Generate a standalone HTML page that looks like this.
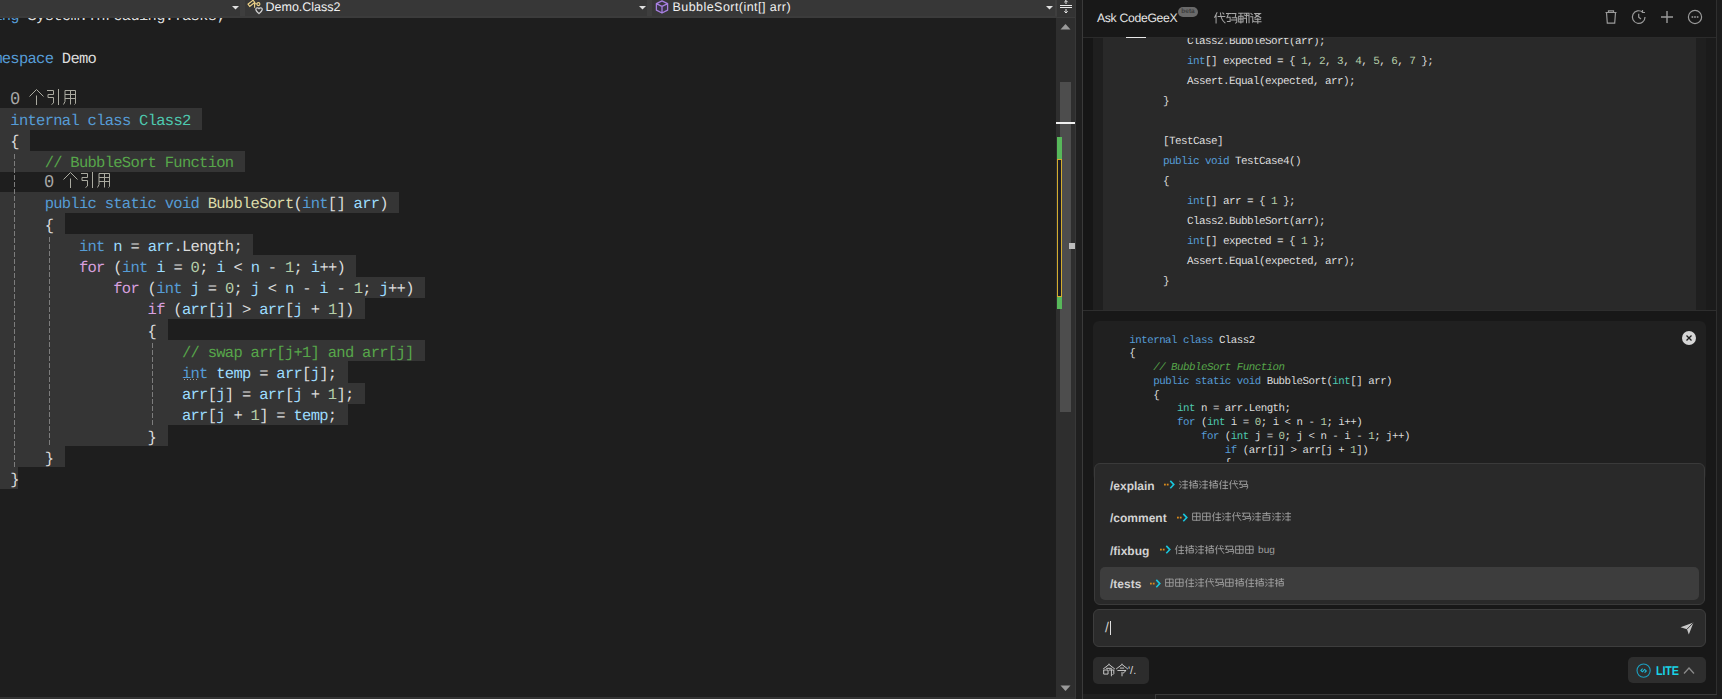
<!DOCTYPE html><html><head><meta charset="utf-8"><style>
*{margin:0;padding:0;box-sizing:border-box}
html,body{width:1722px;height:699px;overflow:hidden;background:#1e1e1e;font-family:"Liberation Sans",sans-serif;text-rendering:geometricPrecision}
.abs{position:absolute}
#ed{position:absolute;left:0;top:18px;width:1056px;height:679px;overflow:hidden;background:#1e1e1e}
#edin{position:absolute;left:0;top:-18px;width:1056px;height:699px}
.sel{position:absolute;left:0;background:#353535}
.guide{position:absolute;width:1px;background:repeating-linear-gradient(to bottom,#7c7c7c 0 5px,transparent 5px 7px)}
.ln{position:absolute;height:21.2px;line-height:21.2px;white-space:pre;font-family:"Liberation Mono",monospace;font-size:15.500px;letter-spacing:-0.721px;padding-top:2.5px}
.lens{position:absolute;font-family:"Liberation Mono",monospace;font-size:18px;line-height:18px;color:#a8a8a8;transform:scaleX(0.95);transform-origin:0 0}
.nvt{top:0px;font-size:12.5px;line-height:15px;color:#f0f0f0;white-space:nowrap}
.ml{position:absolute;white-space:pre;font-family:"Liberation Mono",monospace}
.cmd{font-size:12px;font-weight:bold;color:#d2d2d2;line-height:14px;white-space:nowrap}
.desc{font-size:10px;color:#a0a0a0;line-height:12px;white-space:nowrap}
</style></head><body>
<div id="ed"><div id="edin">
<div class="sel" style="top:108.4px;height:21.2px;width:201.9px"></div>
<div class="sel" style="top:129.6px;height:21.2px;width:30.3px"></div>
<div class="sel" style="top:150.8px;height:21.2px;width:244.8px"></div>
<div class="sel" style="top:191.8px;height:21.2px;width:399.2px"></div>
<div class="sel" style="top:213.0px;height:21.2px;width:64.6px"></div>
<div class="sel" style="top:234.2px;height:21.2px;width:253.4px"></div>
<div class="sel" style="top:255.4px;height:21.2px;width:356.3px"></div>
<div class="sel" style="top:276.6px;height:21.2px;width:425.0px"></div>
<div class="sel" style="top:297.8px;height:21.2px;width:364.9px"></div>
<div class="sel" style="top:319.0px;height:21.2px;width:167.6px"></div>
<div class="sel" style="top:340.2px;height:21.2px;width:425.0px"></div>
<div class="sel" style="top:361.4px;height:21.2px;width:347.8px"></div>
<div class="sel" style="top:382.6px;height:21.2px;width:364.9px"></div>
<div class="sel" style="top:403.8px;height:21.2px;width:347.8px"></div>
<div class="sel" style="top:425.0px;height:21.2px;width:167.6px"></div>
<div class="sel" style="top:446.2px;height:21.2px;width:64.6px"></div>
<div class="sel" style="top:467.4px;height:21.2px;width:18.3px"></div>
<div class="guide" style="left:14px;top:153.5px;height:313.5px"></div>
<div class="guide" style="left:49px;top:236.5px;height:209.5px"></div>
<div class="guide" style="left:152px;top:342.5px;height:82.5px"></div>
<div class="ln" style="top:3.8px;left:-24.00px"><span style="color:#569cd6">using</span><span style="color:#dcdcdc"> System.Threading.Tasks;</span></div>
<div class="ln" style="top:46.2px;left:-24.00px"><span style="color:#569cd6">namespace</span><span style="color:#dcdcdc"> Demo</span></div>
<div class="ln" style="top:67.4px;left:-24.00px"><span style="color:#dcdcdc">{</span></div>
<div class="ln" style="top:108.4px;left:10.32px"><span style="color:#569cd6">internal</span><span style="color:#dcdcdc"> </span><span style="color:#569cd6">class</span><span style="color:#dcdcdc"> </span><span style="color:#4ec9b0">Class2</span></div>
<div class="ln" style="top:129.6px;left:10.32px"><span style="color:#dcdcdc">{</span></div>
<div class="ln" style="top:150.8px;left:44.64px"><span style="color:#57a64a">// BubbleSort Function</span></div>
<div class="ln" style="top:191.8px;left:44.64px"><span style="color:#569cd6">public</span><span style="color:#dcdcdc"> </span><span style="color:#569cd6">static</span><span style="color:#dcdcdc"> </span><span style="color:#569cd6">void</span><span style="color:#dcdcdc"> </span><span style="color:#dcdcaa">BubbleSort</span><span style="color:#dcdcdc">(</span><span style="color:#569cd6">int</span><span style="color:#dcdcdc">[] </span><span style="color:#9cdcfe">arr</span><span style="color:#dcdcdc">)</span></div>
<div class="ln" style="top:213.0px;left:44.64px"><span style="color:#dcdcdc">{</span></div>
<div class="ln" style="top:234.2px;left:78.96px"><span style="color:#569cd6">int</span><span style="color:#dcdcdc"> </span><span style="color:#9cdcfe">n</span><span style="color:#dcdcdc"> = </span><span style="color:#9cdcfe">arr</span><span style="color:#dcdcdc">.Length;</span></div>
<div class="ln" style="top:255.4px;left:78.96px"><span style="color:#d8a0df">for</span><span style="color:#dcdcdc"> (</span><span style="color:#569cd6">int</span><span style="color:#dcdcdc"> </span><span style="color:#9cdcfe">i</span><span style="color:#dcdcdc"> = </span><span style="color:#b5cea8">0</span><span style="color:#dcdcdc">; </span><span style="color:#9cdcfe">i</span><span style="color:#dcdcdc"> &lt; </span><span style="color:#9cdcfe">n</span><span style="color:#dcdcdc"> - </span><span style="color:#b5cea8">1</span><span style="color:#dcdcdc">; </span><span style="color:#9cdcfe">i</span><span style="color:#dcdcdc">++)</span></div>
<div class="ln" style="top:276.6px;left:113.28px"><span style="color:#d8a0df">for</span><span style="color:#dcdcdc"> (</span><span style="color:#569cd6">int</span><span style="color:#dcdcdc"> </span><span style="color:#9cdcfe">j</span><span style="color:#dcdcdc"> = </span><span style="color:#b5cea8">0</span><span style="color:#dcdcdc">; </span><span style="color:#9cdcfe">j</span><span style="color:#dcdcdc"> &lt; </span><span style="color:#9cdcfe">n</span><span style="color:#dcdcdc"> - </span><span style="color:#9cdcfe">i</span><span style="color:#dcdcdc"> - </span><span style="color:#b5cea8">1</span><span style="color:#dcdcdc">; </span><span style="color:#9cdcfe">j</span><span style="color:#dcdcdc">++)</span></div>
<div class="ln" style="top:297.8px;left:147.60px"><span style="color:#d8a0df">if</span><span style="color:#dcdcdc"> (</span><span style="color:#9cdcfe">arr</span><span style="color:#dcdcdc">[</span><span style="color:#9cdcfe">j</span><span style="color:#dcdcdc">] &gt; </span><span style="color:#9cdcfe">arr</span><span style="color:#dcdcdc">[</span><span style="color:#9cdcfe">j</span><span style="color:#dcdcdc"> + </span><span style="color:#b5cea8">1</span><span style="color:#dcdcdc">])</span></div>
<div class="ln" style="top:319.0px;left:147.60px"><span style="color:#dcdcdc">{</span></div>
<div class="ln" style="top:340.2px;left:181.92px"><span style="color:#57a64a">// swap arr[j+1] and arr[j]</span></div>
<div class="ln" style="top:361.4px;left:181.92px"><span style="color:#569cd6">int</span><span style="color:#dcdcdc"> </span><span style="color:#9cdcfe">temp</span><span style="color:#dcdcdc"> = </span><span style="color:#9cdcfe">arr</span><span style="color:#dcdcdc">[</span><span style="color:#9cdcfe">j</span><span style="color:#dcdcdc">];</span></div>
<div class="ln" style="top:382.6px;left:181.92px"><span style="color:#9cdcfe">arr</span><span style="color:#dcdcdc">[</span><span style="color:#9cdcfe">j</span><span style="color:#dcdcdc">] = </span><span style="color:#9cdcfe">arr</span><span style="color:#dcdcdc">[</span><span style="color:#9cdcfe">j</span><span style="color:#dcdcdc"> + </span><span style="color:#b5cea8">1</span><span style="color:#dcdcdc">];</span></div>
<div class="ln" style="top:403.8px;left:181.92px"><span style="color:#9cdcfe">arr</span><span style="color:#dcdcdc">[</span><span style="color:#9cdcfe">j</span><span style="color:#dcdcdc"> + </span><span style="color:#b5cea8">1</span><span style="color:#dcdcdc">] = </span><span style="color:#9cdcfe">temp</span><span style="color:#dcdcdc">;</span></div>
<div class="ln" style="top:425.0px;left:147.60px"><span style="color:#dcdcdc">}</span></div>
<div class="ln" style="top:446.2px;left:44.64px"><span style="color:#dcdcdc">}</span></div>
<div class="ln" style="top:467.4px;left:10.32px"><span style="color:#dcdcdc">}</span></div>
<div class="abs" style="left:184px;top:379px;width:13px;height:1px;background:repeating-linear-gradient(to right,#a0a0a0 0 1px,transparent 1px 3px)"></div>
<div class="lens" style="left:10.4px;top:91px">0</div>
<svg class="abs" style="left:0px;top:0px" width="90" height="110"><path d="M36.5 89.5L29.5 96.5 M36.5 89.5L43.5 96.5 M36.5 95.5V105 M47 90.5H53.5V94.5H48V97.5H53.5V103L51.5 104.5 M58.5 89V105 M65 90.5V101.5L63.5 104.5 M65 90.5H75.5V103.5L74.5 104.5 M70.5 90.5V104.5 M65 94.5H75.5 M65 98.5H75.5" stroke="#aaaaa0" stroke-width="1" fill="none"/></svg>
<div class="lens" style="left:44.4px;top:174px">0</div>
<svg class="abs" style="left:34px;top:83px" width="90" height="110"><path d="M36.5 89.5L29.5 96.5 M36.5 89.5L43.5 96.5 M36.5 95.5V105 M47 90.5H53.5V94.5H48V97.5H53.5V103L51.5 104.5 M58.5 89V105 M65 90.5V101.5L63.5 104.5 M65 90.5H75.5V103.5L74.5 104.5 M70.5 90.5V104.5 M65 94.5H75.5 M65 98.5H75.5" stroke="#aaaaa0" stroke-width="1" fill="none"/></svg>
</div></div>

<div class="abs" style="left:0;top:0;width:1057px;height:16px;background:#3e3e3e"></div>
<div class="abs" style="left:0;top:16px;width:1075px;height:2px;background:#3b3b3b"></div>
<div class="abs" style="left:0;top:0;width:240px;height:16px;background:#373737"></div>
<div class="abs" style="left:245px;top:0;width:402px;height:16px;background:#373737"></div>
<div class="abs" style="left:652px;top:0;width:403px;height:16px;background:#373737"></div>
<div class="abs" style="left:1057px;top:0;width:18px;height:17px;background:#333333"></div>
<svg class="abs" style="left:232px;top:5px" width="7" height="5"><path d="M0 1H7L3.5 4.5Z" fill="#e0e0e0"/></svg><svg class="abs" style="left:638.5px;top:5px" width="7" height="5"><path d="M0 1H7L3.5 4.5Z" fill="#e0e0e0"/></svg><svg class="abs" style="left:1045.5px;top:5px" width="7" height="5"><path d="M0 1H7L3.5 4.5Z" fill="#e0e0e0"/></svg>
<svg class="abs" style="left:244px;top:0" width="22" height="16" viewBox="0 0 22 16">
 <rect x="4.2" y="1.9" width="6.4" height="2.8" transform="rotate(-38 7.4 3.3)" stroke="#f0d58a" stroke-width="1.1" fill="none"/>
 <path d="M10.6 2.6V7.8 M10.2 3.8H12.8" stroke="#f0d58a" stroke-width="1.1" fill="none"/>
 <circle cx="14.4" cy="4.1" r="1.5" stroke="#f0d58a" stroke-width="1.1" fill="none"/>
 <path d="M11.8 9.3C11.8 7.6 14 7.4 15 8.7C16 7.4 18.3 7.6 18.3 9.3C18.3 10.9 15 13.6 15 13.6C15 13.6 11.8 10.9 11.8 9.3Z" stroke="#d0d0d0" stroke-width="1.2" fill="none"/>
</svg>
<div class="abs nvt" style="left:265.5px">Demo.Class2</div>
<svg class="abs" style="left:655px;top:0" width="14" height="14" viewBox="0 0 14 14">
 <path d="M7 0.8L12.6 3.6V10.2L7 13L1.4 10.2V3.6Z M1.4 3.6L7 6.4L12.6 3.6 M7 6.4V13" stroke="#a77fe0" stroke-width="1.3" fill="#3a3548" stroke-linejoin="round"/>
</svg>
<div class="abs nvt" style="left:672.5px;letter-spacing:0.45px">BubbleSort(int[] arr)</div>
<svg class="abs" style="left:1059px;top:0" width="14" height="14" viewBox="0 0 14 14">
 <path d="M1 5.5H13 M1 7.5H13" stroke="#e8e8e8" stroke-width="1.1"/>
 <path d="M7 0.5V4 M7 9V13" stroke="#e8e8e8" stroke-width="1"/>
 <path d="M5.3 2.2L7 0.5L8.7 2.2 M5.3 11.3L7 13L8.7 11.3" stroke="#e8e8e8" stroke-width="1" fill="none"/>
</svg>


<div class="abs" style="left:1056px;top:18px;width:19px;height:681px;background:#2e2e2e"></div>
<div class="abs" style="left:1075px;top:0;width:1px;height:699px;background:#383838"></div>
<div class="abs" style="left:1076px;top:0;width:6px;height:699px;background:#1f1f1f"></div>
<svg class="abs" style="left:1060px;top:23px" width="11" height="7"><path d="M0.5 6.5H10.5L5.5 1Z" fill="#9a9a9a"/></svg>
<svg class="abs" style="left:1060px;top:685px" width="11" height="7"><path d="M0.5 0.5H10.5L5.5 6Z" fill="#9a9a9a"/></svg>
<div class="abs" style="left:1060px;top:82px;width:11px;height:330px;background:#4d4d4d"></div>
<div class="abs" style="left:1056px;top:122px;width:19px;height:2px;background:#f0f0f0"></div>
<div class="abs" style="left:1057px;top:137px;width:5px;height:22px;background:#57b85a"></div>
<div class="abs" style="left:1057px;top:159px;width:5px;height:138px;border:1px solid #d4ad2e;background:#1c1c24"></div>
<div class="abs" style="left:1057px;top:297px;width:5px;height:12px;background:#57b85a"></div>
<div class="abs" style="left:1069px;top:243px;width:6px;height:6px;background:#bdbdbd"></div>
<div class="abs" style="left:0;top:697px;width:1075px;height:2px;background:#333333"></div>

<div class="abs" style="left:1082px;top:0;width:1px;height:699px;background:#3a3a3a"></div>
<div class="abs" style="left:1083px;top:0;width:634px;height:694px;background:#181818"></div>
<div class="abs" style="left:1716px;top:0;width:1px;height:695px;background:#2f2f2f"></div>
<div class="abs" style="left:1717px;top:0;width:5px;height:699px;background:#1c1c1c"></div>
<div class="abs" style="left:1083px;top:694px;width:634px;height:5px;background:#1f1f1f"></div>
<div class="abs" style="left:1155px;top:694px;width:562px;height:5px;border-top:1px solid #3a3a3a;border-left:1px solid #3a3a3a"></div>
<div class="abs" style="left:1083px;top:0;width:633px;height:37px;background:#181818"></div>
<div class="abs" style="left:1083px;top:37px;width:633px;height:1px;background:#2b2b2b"></div>
<div class="abs" style="left:1126px;top:37px;width:20px;height:1px;background:#e8e8e8"></div>
<div class="abs" style="left:1097px;top:11px;font-size:12.2px;letter-spacing:-0.3px;color:#e6e6e6;white-space:nowrap;line-height:14px">Ask CodeGeeX</div>
<div class="abs" style="left:1178px;top:7px;width:20px;height:10px;border-radius:5px;background:#6a6a6a;color:#3c3c3c;font-size:6.5px;line-height:10px;text-align:center;font-weight:bold">beta</div>
<div class="abs" style="left:1214px;top:11px;white-space:nowrap;line-height:14px"><span style="display:inline-block;width:12.00px"><svg width="11.50" height="11.50" viewBox="0 0 10 10" style="vertical-align:-0.12em;overflow:visible"><path d="M2.6 0.6L0.6 4.6 M1.8 3V9.6 M3.6 4H9.4 M5.6 0.8Q6 6.5 9.6 9.4 M7.6 0.8L8.6 1.8" stroke="#a8a8a8" stroke-width="0.870" fill="none" stroke-linecap="square" stroke-linejoin="miter"/></svg></span><span style="display:inline-block;width:12.00px"><svg width="11.50" height="11.50" viewBox="0 0 10 10" style="vertical-align:-0.12em;overflow:visible"><path d="M0.4 1.3H4 M2.2 1.3L0.8 5 M1.2 4.6H3.6V8.2H1.2 M5 1.2H8.6L8 5H5.4 M5.4 5H9.4V8.8L8.4 9.6 M4.8 7H8.6" stroke="#a8a8a8" stroke-width="0.870" fill="none" stroke-linecap="square" stroke-linejoin="miter"/></svg></span><span style="display:inline-block;width:12.00px"><svg width="11.50" height="11.50" viewBox="0 0 10 10" style="vertical-align:-0.12em;overflow:visible"><path d="M0.6 1H4.4 M2.5 1V9.6 M0.6 3.6H4.4V8.6H0.6Z M0.6 6H4.4 M5.4 1H7.4V4.4 M5.6 2.6L7 3.4 M7.6 1H9.6V9.4 M7.8 2.6L9.2 3.4 M5.4 5.4H7.4V9.4" stroke="#a8a8a8" stroke-width="0.870" fill="none" stroke-linecap="square" stroke-linejoin="miter"/></svg></span><span style="display:inline-block;width:12.00px"><svg width="11.50" height="11.50" viewBox="0 0 10 10" style="vertical-align:-0.12em;overflow:visible"><path d="M0.8 1.2L2 2.2 M0.6 4.2H2.4V8.8L3.2 8 M4 1.2H9 L4.2 5 M4.8 2.4L9.4 5 M4.4 6.4H9.2 M4 8.4H9.6 M6.8 5.4V9.8" stroke="#a8a8a8" stroke-width="0.870" fill="none" stroke-linecap="square" stroke-linejoin="miter"/></svg></span></div>
<svg class="abs" style="left:1600px;top:8px" width="110" height="20" viewBox="0 0 110 20">
 <g stroke="#9a9a9a" stroke-width="1.2" fill="none">
  <path d="M5.5 4.5H16.5 M8.5 4.5V2.8H13.5V4.5 M6.5 4.5L7.3 15.2H14.7L15.5 4.5"/>
  <path d="M45 9A6.3 6.3 0 1 1 42.7 4.2 M42.5 2V4.5H45" />
  <path d="M38.7 5.7V9.3L41 11"/>
  <path d="M67 3V15 M61 9H73" stroke-width="1.4"/>
  <circle cx="95" cy="9" r="6.6"/>
 </g>
 <g fill="#9a9a9a"><rect x="91.6" y="8.2" width="1.6" height="1.6"/><rect x="94.2" y="8.2" width="1.6" height="1.6"/><rect x="96.8" y="8.2" width="1.6" height="1.6"/></g>
</svg>
<div class="abs" style="left:1083px;top:38px;width:10px;height:272px;background:#161616"></div>
<div class="abs" style="left:1093px;top:38px;width:10px;height:272px;background:#1f1f1f"></div>
<div class="abs" style="left:1103px;top:38px;width:593px;height:272px;background:#292929"></div>
<div class="abs" style="left:1696px;top:38px;width:10px;height:272px;background:#1f1f1f"></div>
<div class="abs" style="left:1706px;top:38px;width:10px;height:272px;background:#1b1b1b"></div>
<div class="abs" style="left:1083px;top:310px;width:633px;height:1px;background:#2e2e2e"></div>
<div class="abs" style="left:1103px;top:38px;width:593px;height:272px;overflow:hidden"><div class="abs" style="left:-1103px;top:-38px;width:1722px;height:699px">
<div class="ml" style="left:1115px;top:32.1px;font-size:11px;letter-spacing:-0.601px;line-height:20px;height:20px"><span style="color:#dcdcdc">            Class2.BubbleSort(arr);</span></div>
<div class="ml" style="left:1115px;top:52.1px;font-size:11px;letter-spacing:-0.601px;line-height:20px;height:20px"><span style="color:#dcdcdc">            </span><span style="color:#569cd6">int</span><span style="color:#dcdcdc">[] expected = { </span><span style="color:#b5cea8">1</span><span style="color:#dcdcdc">, </span><span style="color:#b5cea8">2</span><span style="color:#dcdcdc">, </span><span style="color:#b5cea8">3</span><span style="color:#dcdcdc">, </span><span style="color:#b5cea8">4</span><span style="color:#dcdcdc">, </span><span style="color:#b5cea8">5</span><span style="color:#dcdcdc">, </span><span style="color:#b5cea8">6</span><span style="color:#dcdcdc">, </span><span style="color:#b5cea8">7</span><span style="color:#dcdcdc"> };</span></div>
<div class="ml" style="left:1115px;top:72.2px;font-size:11px;letter-spacing:-0.601px;line-height:20px;height:20px"><span style="color:#dcdcdc">            Assert.Equal(expected, arr);</span></div>
<div class="ml" style="left:1115px;top:92.2px;font-size:11px;letter-spacing:-0.601px;line-height:20px;height:20px"><span style="color:#dcdcdc">        }</span></div>
<div class="ml" style="left:1115px;top:132.2px;font-size:11px;letter-spacing:-0.601px;line-height:20px;height:20px"><span style="color:#dcdcdc">        [TestCase]</span></div>
<div class="ml" style="left:1115px;top:152.2px;font-size:11px;letter-spacing:-0.601px;line-height:20px;height:20px"><span style="color:#dcdcdc">        </span><span style="color:#569cd6">public</span><span style="color:#dcdcdc"> </span><span style="color:#569cd6">void</span><span style="color:#dcdcdc"> TestCase4()</span></div>
<div class="ml" style="left:1115px;top:172.2px;font-size:11px;letter-spacing:-0.601px;line-height:20px;height:20px"><span style="color:#dcdcdc">        {</span></div>
<div class="ml" style="left:1115px;top:192.2px;font-size:11px;letter-spacing:-0.601px;line-height:20px;height:20px"><span style="color:#dcdcdc">            </span><span style="color:#569cd6">int</span><span style="color:#dcdcdc">[] arr = { </span><span style="color:#b5cea8">1</span><span style="color:#dcdcdc"> };</span></div>
<div class="ml" style="left:1115px;top:212.2px;font-size:11px;letter-spacing:-0.601px;line-height:20px;height:20px"><span style="color:#dcdcdc">            Class2.BubbleSort(arr);</span></div>
<div class="ml" style="left:1115px;top:232.2px;font-size:11px;letter-spacing:-0.601px;line-height:20px;height:20px"><span style="color:#dcdcdc">            </span><span style="color:#569cd6">int</span><span style="color:#dcdcdc">[] expected = { </span><span style="color:#b5cea8">1</span><span style="color:#dcdcdc"> };</span></div>
<div class="ml" style="left:1115px;top:252.2px;font-size:11px;letter-spacing:-0.601px;line-height:20px;height:20px"><span style="color:#dcdcdc">            Assert.Equal(expected, arr);</span></div>
<div class="ml" style="left:1115px;top:272.1px;font-size:11px;letter-spacing:-0.601px;line-height:20px;height:20px"><span style="color:#dcdcdc">        }</span></div>
</div></div>
<div class="abs" style="left:1093px;top:321px;width:613px;height:160px;border-radius:6px;background:#202020"></div>
<div class="abs" style="left:1093px;top:321px;width:613px;height:141px;overflow:hidden"><div class="abs" style="left:-1093px;top:-321px;width:1722px;height:699px">
<div class="ml" style="left:1129.3px;top:333.5px;font-size:10.8px;letter-spacing:-0.509px;line-height:14px;height:14px"><span style="color:#569cd6">internal</span><span style="color:#dcdcdc"> </span><span style="color:#569cd6">class</span><span style="color:#dcdcdc"> Class2</span></div>
<div class="ml" style="left:1129.3px;top:347.3px;font-size:10.8px;letter-spacing:-0.509px;line-height:14px;height:14px"><span style="color:#dcdcdc">{</span></div>
<div class="ml" style="left:1129.3px;top:361.0px;font-size:10.8px;letter-spacing:-0.509px;line-height:14px;height:14px"><span style="color:#dcdcdc">    </span><span style="color:#57a64a;font-style:italic">// BubbleSort Function</span></div>
<div class="ml" style="left:1129.3px;top:374.8px;font-size:10.8px;letter-spacing:-0.509px;line-height:14px;height:14px"><span style="color:#dcdcdc">    </span><span style="color:#569cd6">public</span><span style="color:#dcdcdc"> </span><span style="color:#569cd6">static</span><span style="color:#dcdcdc"> </span><span style="color:#569cd6">void</span><span style="color:#dcdcdc"> BubbleSort(</span><span style="color:#4ec9b0">int</span><span style="color:#dcdcdc">[] arr)</span></div>
<div class="ml" style="left:1129.3px;top:388.5px;font-size:10.8px;letter-spacing:-0.509px;line-height:14px;height:14px"><span style="color:#dcdcdc">    {</span></div>
<div class="ml" style="left:1129.3px;top:402.3px;font-size:10.8px;letter-spacing:-0.509px;line-height:14px;height:14px"><span style="color:#dcdcdc">        </span><span style="color:#4ec9b0">int</span><span style="color:#dcdcdc"> n = arr.Length;</span></div>
<div class="ml" style="left:1129.3px;top:416.0px;font-size:10.8px;letter-spacing:-0.509px;line-height:14px;height:14px"><span style="color:#dcdcdc">        </span><span style="color:#569cd6">for</span><span style="color:#dcdcdc"> (</span><span style="color:#4ec9b0">int</span><span style="color:#dcdcdc"> i = </span><span style="color:#b5cea8">0</span><span style="color:#dcdcdc">; i &lt; n - </span><span style="color:#b5cea8">1</span><span style="color:#dcdcdc">; i++)</span></div>
<div class="ml" style="left:1129.3px;top:429.8px;font-size:10.8px;letter-spacing:-0.509px;line-height:14px;height:14px"><span style="color:#dcdcdc">            </span><span style="color:#569cd6">for</span><span style="color:#dcdcdc"> (</span><span style="color:#4ec9b0">int</span><span style="color:#dcdcdc"> j = </span><span style="color:#b5cea8">0</span><span style="color:#dcdcdc">; j &lt; n - i - </span><span style="color:#b5cea8">1</span><span style="color:#dcdcdc">; j++)</span></div>
<div class="ml" style="left:1129.3px;top:443.5px;font-size:10.8px;letter-spacing:-0.509px;line-height:14px;height:14px"><span style="color:#dcdcdc">                </span><span style="color:#569cd6">if</span><span style="color:#dcdcdc"> (arr[j] &gt; arr[j + </span><span style="color:#b5cea8">1</span><span style="color:#dcdcdc">])</span></div>
<div class="ml" style="left:1129.3px;top:457.3px;font-size:10.8px;letter-spacing:-0.509px;line-height:14px;height:14px"><span style="color:#dcdcdc">                {</span></div>
</div></div>
<svg class="abs" style="left:1681px;top:330px" width="16" height="16" viewBox="0 0 16 16"><circle cx="8" cy="8" r="7" fill="#d6d6d6"/><path d="M5.5 5.5L10.5 10.5M10.5 5.5L5.5 10.5" stroke="#1e1e1e" stroke-width="1.3"/></svg>
<div class="abs" style="left:1094px;top:463px;width:611px;height:142px;border-radius:6px;background:#292929;border:1px solid #3a3a3a"></div>
<div class="abs" style="left:1100px;top:567px;width:599px;height:33px;border-radius:5px;background:#3d3d3d"></div>
<div class="abs cmd" style="left:1110px;top:479.1px">/explain</div>
<svg class="abs" style="left:1164px;top:480.4px" width="12" height="9" viewBox="0 0 12 9"><rect x="0" y="3.7" width="1.8" height="1.8" fill="#d88a1c"/><rect x="2.8" y="3.7" width="1.8" height="1.8" fill="#d88a1c"/><path d="M6.3 0.9L9.8 4.6L6.3 8.3" stroke="#19c6dc" stroke-width="1.6" fill="none"/></svg>
<div class="abs desc" style="left:1179.3px;top:479.8px"><span style="display:inline-block;width:10.00px"><svg width="9.20" height="9.20" viewBox="0 0 10 10" style="vertical-align:-0.12em;overflow:visible"><path d="M0.8 1.5L2.2 2.5 M0.6 4.6L2 5.4 M0.8 9L2.4 6.8 M4 1.8H9.2 M6.6 0.4V9.6 M4 5.2H9.2 M4.2 8.6H9" stroke="#9c9c9c" stroke-width="0.978" fill="none" stroke-linecap="square" stroke-linejoin="miter"/></svg></span><span style="display:inline-block;width:10.00px"><svg width="9.20" height="9.20" viewBox="0 0 10 10" style="vertical-align:-0.12em;overflow:visible"><path d="M1.8 0.8V9.4 M0.4 3H3.2 M0.6 6.2L3 5.4 M4.6 1.4H9.4 M5 3.8H9V8.6H5Z M5 6.2H9 M7 0.6V3.8" stroke="#9c9c9c" stroke-width="0.978" fill="none" stroke-linecap="square" stroke-linejoin="miter"/></svg></span><span style="display:inline-block;width:10.00px"><svg width="9.20" height="9.20" viewBox="0 0 10 10" style="vertical-align:-0.12em;overflow:visible"><path d="M0.8 1.5L2.2 2.5 M0.6 4.6L2 5.4 M0.8 9L2.4 6.8 M4 1.8H9.2 M6.6 0.4V9.6 M4 5.2H9.2 M4.2 8.6H9" stroke="#9c9c9c" stroke-width="0.978" fill="none" stroke-linecap="square" stroke-linejoin="miter"/></svg></span><span style="display:inline-block;width:10.00px"><svg width="9.20" height="9.20" viewBox="0 0 10 10" style="vertical-align:-0.12em;overflow:visible"><path d="M1.8 0.8V9.4 M0.4 3H3.2 M0.6 6.2L3 5.4 M4.6 1.4H9.4 M5 3.8H9V8.6H5Z M5 6.2H9 M7 0.6V3.8" stroke="#9c9c9c" stroke-width="0.978" fill="none" stroke-linecap="square" stroke-linejoin="miter"/></svg></span><span style="display:inline-block;width:10.00px"><svg width="9.20" height="9.20" viewBox="0 0 10 10" style="vertical-align:-0.12em;overflow:visible"><path d="M2.6 0.6L0.6 4.6 M1.8 3V9.6 M4.2 2.4H9.4 M6.8 0.6V9.6 M4.4 6H9.2 M4.2 9.2H9.4" stroke="#9c9c9c" stroke-width="0.978" fill="none" stroke-linecap="square" stroke-linejoin="miter"/></svg></span><span style="display:inline-block;width:10.00px"><svg width="9.20" height="9.20" viewBox="0 0 10 10" style="vertical-align:-0.12em;overflow:visible"><path d="M2.6 0.6L0.6 4.6 M1.8 3V9.6 M3.6 4H9.4 M5.6 0.8Q6 6.5 9.6 9.4 M7.6 0.8L8.6 1.8" stroke="#9c9c9c" stroke-width="0.978" fill="none" stroke-linecap="square" stroke-linejoin="miter"/></svg></span><span style="display:inline-block;width:10.00px"><svg width="9.20" height="9.20" viewBox="0 0 10 10" style="vertical-align:-0.12em;overflow:visible"><path d="M0.4 1.3H4 M2.2 1.3L0.8 5 M1.2 4.6H3.6V8.2H1.2 M5 1.2H8.6L8 5H5.4 M5.4 5H9.4V8.8L8.4 9.6 M4.8 7H8.6" stroke="#9c9c9c" stroke-width="0.978" fill="none" stroke-linecap="square" stroke-linejoin="miter"/></svg></span></div>
<div class="abs cmd" style="left:1110px;top:511.2px">/comment</div>
<svg class="abs" style="left:1177px;top:512.5px" width="12" height="9" viewBox="0 0 12 9"><rect x="0" y="3.7" width="1.8" height="1.8" fill="#d88a1c"/><rect x="2.8" y="3.7" width="1.8" height="1.8" fill="#d88a1c"/><path d="M6.3 0.9L9.8 4.6L6.3 8.3" stroke="#19c6dc" stroke-width="1.6" fill="none"/></svg>
<div class="abs desc" style="left:1192.3px;top:511.9px"><span style="display:inline-block;width:10.00px"><svg width="9.20" height="9.20" viewBox="0 0 10 10" style="vertical-align:-0.12em;overflow:visible"><path d="M1.2 1.2H8.8V9H1.2Z M1.2 5.1H8.8 M5 1.2V9" stroke="#9c9c9c" stroke-width="0.978" fill="none" stroke-linecap="square" stroke-linejoin="miter"/></svg></span><span style="display:inline-block;width:10.00px"><svg width="9.20" height="9.20" viewBox="0 0 10 10" style="vertical-align:-0.12em;overflow:visible"><path d="M1.2 1.2H8.8V9H1.2Z M1.2 5.1H8.8 M5 1.2V9" stroke="#9c9c9c" stroke-width="0.978" fill="none" stroke-linecap="square" stroke-linejoin="miter"/></svg></span><span style="display:inline-block;width:10.00px"><svg width="9.20" height="9.20" viewBox="0 0 10 10" style="vertical-align:-0.12em;overflow:visible"><path d="M2.6 0.6L0.6 4.6 M1.8 3V9.6 M4.2 2.4H9.4 M6.8 0.6V9.6 M4.4 6H9.2 M4.2 9.2H9.4" stroke="#9c9c9c" stroke-width="0.978" fill="none" stroke-linecap="square" stroke-linejoin="miter"/></svg></span><span style="display:inline-block;width:10.00px"><svg width="9.20" height="9.20" viewBox="0 0 10 10" style="vertical-align:-0.12em;overflow:visible"><path d="M0.8 1.5L2.2 2.5 M0.6 4.6L2 5.4 M0.8 9L2.4 6.8 M4 1.8H9.2 M6.6 0.4V9.6 M4 5.2H9.2 M4.2 8.6H9" stroke="#9c9c9c" stroke-width="0.978" fill="none" stroke-linecap="square" stroke-linejoin="miter"/></svg></span><span style="display:inline-block;width:10.00px"><svg width="9.20" height="9.20" viewBox="0 0 10 10" style="vertical-align:-0.12em;overflow:visible"><path d="M2.6 0.6L0.6 4.6 M1.8 3V9.6 M3.6 4H9.4 M5.6 0.8Q6 6.5 9.6 9.4 M7.6 0.8L8.6 1.8" stroke="#9c9c9c" stroke-width="0.978" fill="none" stroke-linecap="square" stroke-linejoin="miter"/></svg></span><span style="display:inline-block;width:10.00px"><svg width="9.20" height="9.20" viewBox="0 0 10 10" style="vertical-align:-0.12em;overflow:visible"><path d="M0.4 1.3H4 M2.2 1.3L0.8 5 M1.2 4.6H3.6V8.2H1.2 M5 1.2H8.6L8 5H5.4 M5.4 5H9.4V8.8L8.4 9.6 M4.8 7H8.6" stroke="#9c9c9c" stroke-width="0.978" fill="none" stroke-linecap="square" stroke-linejoin="miter"/></svg></span><span style="display:inline-block;width:10.00px"><svg width="9.20" height="9.20" viewBox="0 0 10 10" style="vertical-align:-0.12em;overflow:visible"><path d="M0.8 1.5L2.2 2.5 M0.6 4.6L2 5.4 M0.8 9L2.4 6.8 M4 1.8H9.2 M6.6 0.4V9.6 M4 5.2H9.2 M4.2 8.6H9" stroke="#9c9c9c" stroke-width="0.978" fill="none" stroke-linecap="square" stroke-linejoin="miter"/></svg></span><span style="display:inline-block;width:10.00px"><svg width="9.20" height="9.20" viewBox="0 0 10 10" style="vertical-align:-0.12em;overflow:visible"><path d="M1 1.6H9 M5 0.4V3.6 M1.6 3.6H8.4V9H1.6Z M1.6 6.3H8.4" stroke="#9c9c9c" stroke-width="0.978" fill="none" stroke-linecap="square" stroke-linejoin="miter"/></svg></span><span style="display:inline-block;width:10.00px"><svg width="9.20" height="9.20" viewBox="0 0 10 10" style="vertical-align:-0.12em;overflow:visible"><path d="M0.8 1.5L2.2 2.5 M0.6 4.6L2 5.4 M0.8 9L2.4 6.8 M4 1.8H9.2 M6.6 0.4V9.6 M4 5.2H9.2 M4.2 8.6H9" stroke="#9c9c9c" stroke-width="0.978" fill="none" stroke-linecap="square" stroke-linejoin="miter"/></svg></span><span style="display:inline-block;width:10.00px"><svg width="9.20" height="9.20" viewBox="0 0 10 10" style="vertical-align:-0.12em;overflow:visible"><path d="M0.8 1.5L2.2 2.5 M0.6 4.6L2 5.4 M0.8 9L2.4 6.8 M4 1.8H9.2 M6.6 0.4V9.6 M4 5.2H9.2 M4.2 8.6H9" stroke="#9c9c9c" stroke-width="0.978" fill="none" stroke-linecap="square" stroke-linejoin="miter"/></svg></span></div>
<div class="abs cmd" style="left:1110px;top:543.9px">/fixbug</div>
<svg class="abs" style="left:1160px;top:545.2px" width="12" height="9" viewBox="0 0 12 9"><rect x="0" y="3.7" width="1.8" height="1.8" fill="#d88a1c"/><rect x="2.8" y="3.7" width="1.8" height="1.8" fill="#d88a1c"/><path d="M6.3 0.9L9.8 4.6L6.3 8.3" stroke="#19c6dc" stroke-width="1.6" fill="none"/></svg>
<div class="abs desc" style="left:1175.3px;top:544.6px"><span style="display:inline-block;width:10.00px"><svg width="9.20" height="9.20" viewBox="0 0 10 10" style="vertical-align:-0.12em;overflow:visible"><path d="M2.6 0.6L0.6 4.6 M1.8 3V9.6 M4.2 2.4H9.4 M6.8 0.6V9.6 M4.4 6H9.2 M4.2 9.2H9.4" stroke="#9c9c9c" stroke-width="0.978" fill="none" stroke-linecap="square" stroke-linejoin="miter"/></svg></span><span style="display:inline-block;width:10.00px"><svg width="9.20" height="9.20" viewBox="0 0 10 10" style="vertical-align:-0.12em;overflow:visible"><path d="M1.8 0.8V9.4 M0.4 3H3.2 M0.6 6.2L3 5.4 M4.6 1.4H9.4 M5 3.8H9V8.6H5Z M5 6.2H9 M7 0.6V3.8" stroke="#9c9c9c" stroke-width="0.978" fill="none" stroke-linecap="square" stroke-linejoin="miter"/></svg></span><span style="display:inline-block;width:10.00px"><svg width="9.20" height="9.20" viewBox="0 0 10 10" style="vertical-align:-0.12em;overflow:visible"><path d="M0.8 1.5L2.2 2.5 M0.6 4.6L2 5.4 M0.8 9L2.4 6.8 M4 1.8H9.2 M6.6 0.4V9.6 M4 5.2H9.2 M4.2 8.6H9" stroke="#9c9c9c" stroke-width="0.978" fill="none" stroke-linecap="square" stroke-linejoin="miter"/></svg></span><span style="display:inline-block;width:10.00px"><svg width="9.20" height="9.20" viewBox="0 0 10 10" style="vertical-align:-0.12em;overflow:visible"><path d="M1.8 0.8V9.4 M0.4 3H3.2 M0.6 6.2L3 5.4 M4.6 1.4H9.4 M5 3.8H9V8.6H5Z M5 6.2H9 M7 0.6V3.8" stroke="#9c9c9c" stroke-width="0.978" fill="none" stroke-linecap="square" stroke-linejoin="miter"/></svg></span><span style="display:inline-block;width:10.00px"><svg width="9.20" height="9.20" viewBox="0 0 10 10" style="vertical-align:-0.12em;overflow:visible"><path d="M2.6 0.6L0.6 4.6 M1.8 3V9.6 M3.6 4H9.4 M5.6 0.8Q6 6.5 9.6 9.4 M7.6 0.8L8.6 1.8" stroke="#9c9c9c" stroke-width="0.978" fill="none" stroke-linecap="square" stroke-linejoin="miter"/></svg></span><span style="display:inline-block;width:10.00px"><svg width="9.20" height="9.20" viewBox="0 0 10 10" style="vertical-align:-0.12em;overflow:visible"><path d="M0.4 1.3H4 M2.2 1.3L0.8 5 M1.2 4.6H3.6V8.2H1.2 M5 1.2H8.6L8 5H5.4 M5.4 5H9.4V8.8L8.4 9.6 M4.8 7H8.6" stroke="#9c9c9c" stroke-width="0.978" fill="none" stroke-linecap="square" stroke-linejoin="miter"/></svg></span><span style="display:inline-block;width:10.00px"><svg width="9.20" height="9.20" viewBox="0 0 10 10" style="vertical-align:-0.12em;overflow:visible"><path d="M1.2 1.2H8.8V9H1.2Z M1.2 5.1H8.8 M5 1.2V9" stroke="#9c9c9c" stroke-width="0.978" fill="none" stroke-linecap="square" stroke-linejoin="miter"/></svg></span><span style="display:inline-block;width:10.00px"><svg width="9.20" height="9.20" viewBox="0 0 10 10" style="vertical-align:-0.12em;overflow:visible"><path d="M1.2 1.2H8.8V9H1.2Z M1.2 5.1H8.8 M5 1.2V9" stroke="#9c9c9c" stroke-width="0.978" fill="none" stroke-linecap="square" stroke-linejoin="miter"/></svg></span><span> bug</span></div>
<div class="abs cmd" style="left:1110px;top:577.2px">/tests</div>
<svg class="abs" style="left:1150px;top:578.5px" width="12" height="9" viewBox="0 0 12 9"><rect x="0" y="3.7" width="1.8" height="1.8" fill="#d88a1c"/><rect x="2.8" y="3.7" width="1.8" height="1.8" fill="#d88a1c"/><path d="M6.3 0.9L9.8 4.6L6.3 8.3" stroke="#19c6dc" stroke-width="1.6" fill="none"/></svg>
<div class="abs desc" style="left:1165.3px;top:577.9px"><span style="display:inline-block;width:10.00px"><svg width="9.20" height="9.20" viewBox="0 0 10 10" style="vertical-align:-0.12em;overflow:visible"><path d="M1.2 1.2H8.8V9H1.2Z M1.2 5.1H8.8 M5 1.2V9" stroke="#9c9c9c" stroke-width="0.978" fill="none" stroke-linecap="square" stroke-linejoin="miter"/></svg></span><span style="display:inline-block;width:10.00px"><svg width="9.20" height="9.20" viewBox="0 0 10 10" style="vertical-align:-0.12em;overflow:visible"><path d="M1.2 1.2H8.8V9H1.2Z M1.2 5.1H8.8 M5 1.2V9" stroke="#9c9c9c" stroke-width="0.978" fill="none" stroke-linecap="square" stroke-linejoin="miter"/></svg></span><span style="display:inline-block;width:10.00px"><svg width="9.20" height="9.20" viewBox="0 0 10 10" style="vertical-align:-0.12em;overflow:visible"><path d="M2.6 0.6L0.6 4.6 M1.8 3V9.6 M4.2 2.4H9.4 M6.8 0.6V9.6 M4.4 6H9.2 M4.2 9.2H9.4" stroke="#9c9c9c" stroke-width="0.978" fill="none" stroke-linecap="square" stroke-linejoin="miter"/></svg></span><span style="display:inline-block;width:10.00px"><svg width="9.20" height="9.20" viewBox="0 0 10 10" style="vertical-align:-0.12em;overflow:visible"><path d="M0.8 1.5L2.2 2.5 M0.6 4.6L2 5.4 M0.8 9L2.4 6.8 M4 1.8H9.2 M6.6 0.4V9.6 M4 5.2H9.2 M4.2 8.6H9" stroke="#9c9c9c" stroke-width="0.978" fill="none" stroke-linecap="square" stroke-linejoin="miter"/></svg></span><span style="display:inline-block;width:10.00px"><svg width="9.20" height="9.20" viewBox="0 0 10 10" style="vertical-align:-0.12em;overflow:visible"><path d="M2.6 0.6L0.6 4.6 M1.8 3V9.6 M3.6 4H9.4 M5.6 0.8Q6 6.5 9.6 9.4 M7.6 0.8L8.6 1.8" stroke="#9c9c9c" stroke-width="0.978" fill="none" stroke-linecap="square" stroke-linejoin="miter"/></svg></span><span style="display:inline-block;width:10.00px"><svg width="9.20" height="9.20" viewBox="0 0 10 10" style="vertical-align:-0.12em;overflow:visible"><path d="M0.4 1.3H4 M2.2 1.3L0.8 5 M1.2 4.6H3.6V8.2H1.2 M5 1.2H8.6L8 5H5.4 M5.4 5H9.4V8.8L8.4 9.6 M4.8 7H8.6" stroke="#9c9c9c" stroke-width="0.978" fill="none" stroke-linecap="square" stroke-linejoin="miter"/></svg></span><span style="display:inline-block;width:10.00px"><svg width="9.20" height="9.20" viewBox="0 0 10 10" style="vertical-align:-0.12em;overflow:visible"><path d="M1.2 1.2H8.8V9H1.2Z M1.2 5.1H8.8 M5 1.2V9" stroke="#9c9c9c" stroke-width="0.978" fill="none" stroke-linecap="square" stroke-linejoin="miter"/></svg></span><span style="display:inline-block;width:10.00px"><svg width="9.20" height="9.20" viewBox="0 0 10 10" style="vertical-align:-0.12em;overflow:visible"><path d="M1.8 0.8V9.4 M0.4 3H3.2 M0.6 6.2L3 5.4 M4.6 1.4H9.4 M5 3.8H9V8.6H5Z M5 6.2H9 M7 0.6V3.8" stroke="#9c9c9c" stroke-width="0.978" fill="none" stroke-linecap="square" stroke-linejoin="miter"/></svg></span><span style="display:inline-block;width:10.00px"><svg width="9.20" height="9.20" viewBox="0 0 10 10" style="vertical-align:-0.12em;overflow:visible"><path d="M2.6 0.6L0.6 4.6 M1.8 3V9.6 M4.2 2.4H9.4 M6.8 0.6V9.6 M4.4 6H9.2 M4.2 9.2H9.4" stroke="#9c9c9c" stroke-width="0.978" fill="none" stroke-linecap="square" stroke-linejoin="miter"/></svg></span><span style="display:inline-block;width:10.00px"><svg width="9.20" height="9.20" viewBox="0 0 10 10" style="vertical-align:-0.12em;overflow:visible"><path d="M1.8 0.8V9.4 M0.4 3H3.2 M0.6 6.2L3 5.4 M4.6 1.4H9.4 M5 3.8H9V8.6H5Z M5 6.2H9 M7 0.6V3.8" stroke="#9c9c9c" stroke-width="0.978" fill="none" stroke-linecap="square" stroke-linejoin="miter"/></svg></span><span style="display:inline-block;width:10.00px"><svg width="9.20" height="9.20" viewBox="0 0 10 10" style="vertical-align:-0.12em;overflow:visible"><path d="M0.8 1.5L2.2 2.5 M0.6 4.6L2 5.4 M0.8 9L2.4 6.8 M4 1.8H9.2 M6.6 0.4V9.6 M4 5.2H9.2 M4.2 8.6H9" stroke="#9c9c9c" stroke-width="0.978" fill="none" stroke-linecap="square" stroke-linejoin="miter"/></svg></span><span style="display:inline-block;width:10.00px"><svg width="9.20" height="9.20" viewBox="0 0 10 10" style="vertical-align:-0.12em;overflow:visible"><path d="M1.8 0.8V9.4 M0.4 3H3.2 M0.6 6.2L3 5.4 M4.6 1.4H9.4 M5 3.8H9V8.6H5Z M5 6.2H9 M7 0.6V3.8" stroke="#9c9c9c" stroke-width="0.978" fill="none" stroke-linecap="square" stroke-linejoin="miter"/></svg></span></div>
<div class="abs" style="left:1093px;top:609px;width:613px;height:38px;border-radius:6px;background:#2b2b2b;border:1px solid #3d3d3d"></div>
<div class="abs" style="left:1105px;top:619px;font-size:14px;color:#cfcfcf;line-height:16px">/</div>
<div class="abs" style="left:1110px;top:621px;width:1px;height:14px;background:#e0e0e0"></div>
<svg class="abs" style="left:1679px;top:621px" width="16" height="15" viewBox="0 0 16 15"><path d="M1.5 6.2L14.5 1.5L9.8 13.5L8 8.2Z" fill="#c8c8c8"/><path d="M8 8.2L14.5 1.5" stroke="#2b2b2b" stroke-width="0.9"/></svg>
<div class="abs" style="left:1093px;top:657px;width:56px;height:27px;border-radius:5px;background:#2c2c2c"></div>
<div class="abs" style="left:1103px;top:663px;font-size:12.5px;color:#d8d8d8;line-height:15px;white-space:nowrap"><span style="display:inline-block;width:12.50px"><svg width="12.00" height="12.00" viewBox="0 0 10 10" style="vertical-align:-0.12em;overflow:visible"><path d="M5 0.4L0.4 4 M5 0.4L9.6 4 M3 3.6H7 M1 5H4.2V8.4H1Z M5.4 5H9V8 L8.2 8.8 M7 5V9.8" stroke="#d8d8d8" stroke-width="0.750" fill="none" stroke-linecap="square" stroke-linejoin="miter"/></svg></span><span style="display:inline-block;width:12.50px"><svg width="12.00" height="12.00" viewBox="0 0 10 10" style="vertical-align:-0.12em;overflow:visible"><path d="M5 0.4L0.4 4 M5 0.4L9.6 4 M3.6 3.4H6.4 M1.6 5.4H8.4L6 7.6 M5 7V9.8" stroke="#d8d8d8" stroke-width="0.750" fill="none" stroke-linecap="square" stroke-linejoin="miter"/></svg></span><span style="font-size:11px">'/.</span></div>
<div class="abs" style="left:1628px;top:657px;width:78px;height:26px;border-radius:5px;background:#2e2e2e"></div>
<svg class="abs" style="left:1636px;top:663px" width="16" height="16" viewBox="0 0 16 16"><circle cx="7.6" cy="7.6" r="6.6" stroke="#1c9fc0" stroke-width="1.1" fill="none"/><path d="M6.6 5.6L4.9 7.4L6.4 8.9 M8.6 6.3L10.3 7.9L8.6 9.6 M6.3 9.2L8.9 6" stroke="#1cb8d8" stroke-width="1.1" fill="none"/></svg>
<div class="abs" style="left:1656px;top:663.5px;font-size:12.6px;letter-spacing:-0.2px;font-weight:bold;color:#19d3e6;line-height:15px;transform:scaleX(0.86);transform-origin:0 0">LITE</div>
<svg class="abs" style="left:1683px;top:666px" width="12" height="9" viewBox="0 0 12 9"><path d="M1 7.5L6 2L11 7.5" stroke="#8a8a8a" stroke-width="1.3" fill="none"/></svg>
</body></html>
